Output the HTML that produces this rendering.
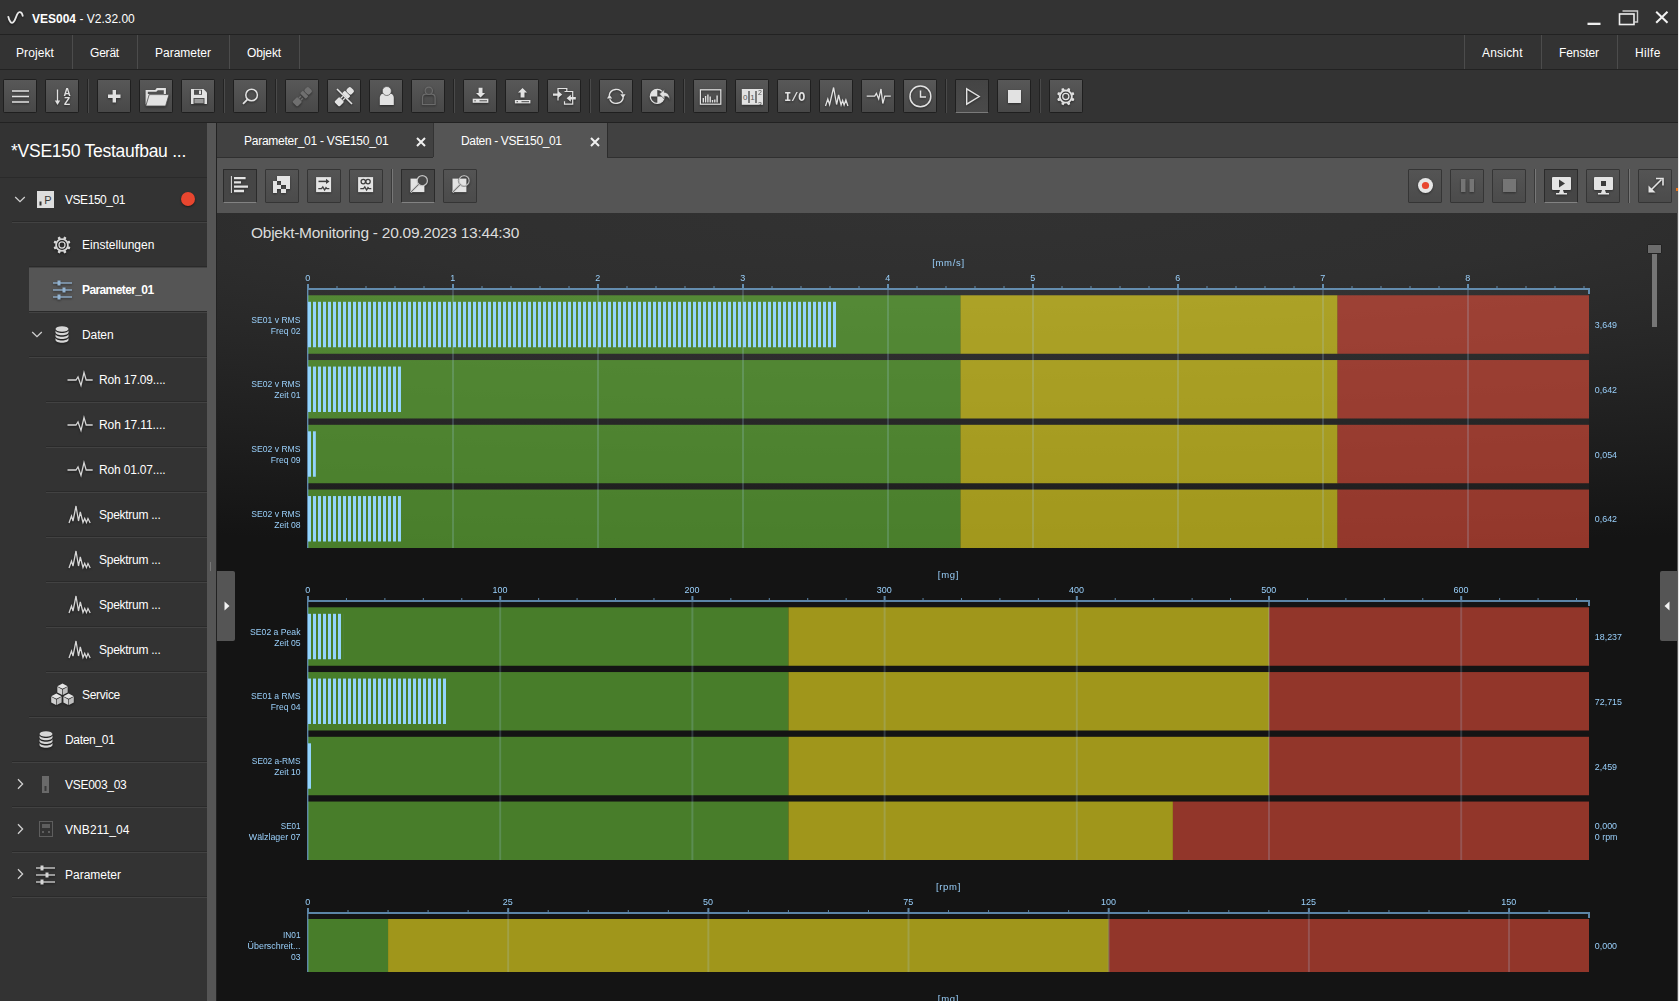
<!DOCTYPE html><html><head><meta charset="utf-8"><title>VES004</title><style>
html,body{margin:0;padding:0;background:#333;}
body{width:1679px;height:1001px;overflow:hidden;position:relative;font-family:"Liberation Sans",sans-serif;color:#fff;font-size:12px;}
.a{position:absolute;}
.t{position:absolute;white-space:nowrap;line-height:1;}
.btn{position:absolute;width:32px;height:32px;border:1px solid #1f1f1f;border-radius:1.5px;background:linear-gradient(#585858,#484848);box-sizing:content-box;}
.btn>svg{position:absolute;left:0;top:0;width:32px;height:32px;overflow:visible;}
.sep{position:absolute;width:1px;background:#232323;border-right:1px solid #4a4a4a;}
.cbtn{position:absolute;width:32px;height:32px;border:1px solid #353535;border-radius:1px;background:linear-gradient(#545454,#4b4b4b);}
.cbtn.on{background:#464646;border-color:#2b2b2b;border-bottom-color:#828282;}
.cbtn>svg{position:absolute;left:0;top:0;width:32px;height:32px;overflow:visible;}
.row{position:absolute;height:1px;background:#474747;}
</style></head><body>
<div class="a" style="left:0;top:0;width:1679px;height:34px;background:#333"></div>
<div class="a" style="left:0;top:34px;width:1679px;height:1px;background:#222"></div>
<svg class="a" style="left:0;top:0;filter:drop-shadow(0 1px 1px rgba(0,0,0,.5))" width="32" height="34" viewBox="0 0 32 34"><path d="M8.300 16.800C9.300 21.500 11.300 23.800 13.300 22.300C16 20.200 16.300 12.600 19.500 12.200C21.400 12 22.300 13.800 22.700 15.800" fill="none" stroke="#e8e8e8" stroke-width="1.800" stroke-linecap="round" stroke-linejoin="round"/></svg>
<div class="t" style="left:32px;top:13px;font-size:12px;color:#fff"><b>VES004</b> - V2.32.00</div>
<svg class="a" style="left:1580px;top:5px" width="95" height="26" viewBox="0 0 95 26"><rect x="7.500" y="17.700" width="13" height="2.300" fill="#eee"/><path d="M42.500 6 h15 v11 h-3" fill="none" stroke="#ccc" stroke-width="1.400"/><rect x="39.500" y="9" width="14.500" height="10.500" fill="#333" stroke="#eee" stroke-width="1.600"/><path d="M76.200 6.700 L87.500 17.700 M87.500 6.700 L76.200 17.700" stroke="#f2f2f2" stroke-width="2" /></svg>
<div class="a" style="left:0;top:35px;width:1679px;height:34px;background:#333"></div>
<div class="a" style="left:0;top:69px;width:1679px;height:1px;background:#222"></div>
<div class="a" style="left:72px;top:35px;width:1px;height:34px;background:#4c4c4c"></div>
<div class="a" style="left:137px;top:35px;width:1px;height:34px;background:#4c4c4c"></div>
<div class="a" style="left:229px;top:35px;width:1px;height:34px;background:#4c4c4c"></div>
<div class="a" style="left:299px;top:35px;width:1px;height:34px;background:#4c4c4c"></div>
<div class="a" style="left:1464px;top:35px;width:1px;height:34px;background:#4c4c4c"></div>
<div class="a" style="left:1541px;top:35px;width:1px;height:34px;background:#4c4c4c"></div>
<div class="a" style="left:1617px;top:35px;width:1px;height:34px;background:#4c4c4c"></div>
<div class="t" style="left:16px;top:47px;font-size:12px;color:#fff;letter-spacing:0.093px;">Projekt</div>
<div class="t" style="left:90px;top:47px;font-size:12px;color:#fff;letter-spacing:-0.202px;">Gerät</div>
<div class="t" style="left:155px;top:47px;font-size:12px;color:#fff;letter-spacing:-0.003px;">Parameter</div>
<div class="t" style="left:247px;top:47px;font-size:12px;color:#fff;letter-spacing:-0.114px;">Objekt</div>
<div class="t" style="left:1482px;top:47px;font-size:12px;color:#fff;letter-spacing:0.2px;">Ansicht</div>
<div class="t" style="left:1559px;top:47px;font-size:12px;color:#fff;letter-spacing:-0.098px;">Fenster</div>
<div class="t" style="left:1635px;top:47px;font-size:12px;color:#fff;letter-spacing:0.359px;">Hilfe</div>
<div class="a" style="left:0;top:70px;width:1679px;height:52px;background:#333"></div>
<div class="a" style="left:0;top:122px;width:1679px;height:1px;background:#222"></div>
<div class="btn" style="left:3px;top:79px;"><svg viewBox="0 0 32 32" style="filter:drop-shadow(0 1px 1px rgba(0,0,0,.45))"><path d="M8 11h17M8 16.5h17M8 22h17" stroke="#e2e2e2" stroke-width="1.6"/></svg></div>
<div class="btn" style="left:45px;top:79px;"><svg viewBox="0 0 32 32" style="filter:drop-shadow(0 1px 1px rgba(0,0,0,.45))"><path d="M11.500 9.500v13" stroke="#e2e2e2" stroke-width="1.300"/><path d="M8.800 20.500h5.400l-2.700 4.500z" fill="#e2e2e2"/><text x="21" y="15.800" font-size="10" font-weight="bold" fill="#e2e2e2" text-anchor="middle" font-family="Liberation Sans, sans-serif">A</text><text x="21" y="24.800" font-size="10" font-weight="bold" fill="#e2e2e2" text-anchor="middle" font-family="Liberation Sans, sans-serif">Z</text></svg></div>
<div class="sep" style="left:87px;top:79px;height:34px"></div>
<div class="btn" style="left:97px;top:79px;"><svg viewBox="0 0 32 32" style="filter:drop-shadow(0 1px 1px rgba(0,0,0,.45))"><path d="M16.300 10v12.500M10 16.200h12.500" stroke="#e2e2e2" stroke-width="3.400"/></svg></div>
<div class="btn" style="left:139px;top:79px;"><svg viewBox="0 0 32 32" style="filter:drop-shadow(0 1px 1px rgba(0,0,0,.45))"><path d="M6.200 24.500V10.700H15.500L17 8.700H25.300V14" fill="#e2e2e2" stroke="#e2e2e2" stroke-width="1.200"/><path d="M7.800 11.800H16.300L17.800 10.300H23.800V14H7.800z" fill="#4e4e4e"/><path d="M5.800 26L9.200 14.600H29L25.600 26z" fill="#e2e2e2" stroke="#4c4c4c" stroke-width="0.800"/></svg></div>
<div class="btn" style="left:181px;top:79px;"><svg viewBox="0 0 32 32" style="filter:drop-shadow(0 1px 1px rgba(0,0,0,.45))"><path d="M9 9h12.5l3.5 3.5V24H9z" fill="#e2e2e2"/><rect x="12" y="9.8" width="8" height="5" fill="#4e4e4e"/><rect x="17" y="10.5" width="2" height="3.5" fill="#e2e2e2"/><rect x="11.5" y="18" width="11" height="6" fill="#4e4e4e"/><path d="M12.5 20h9M12.5 22h9" stroke="#e2e2e2" stroke-width="1"/></svg></div>
<div class="sep" style="left:223px;top:79px;height:34px"></div>
<div class="btn" style="left:233px;top:79px;"><svg viewBox="0 0 32 32" style="filter:drop-shadow(0 1px 1px rgba(0,0,0,.45))"><circle cx="17.600" cy="15" r="5.800" fill="none" stroke="#e2e2e2" stroke-width="1.500"/><path d="M13.500 19.300l-4.500 4.500" stroke="#e2e2e2" stroke-width="1.800"/></svg></div>
<div class="sep" style="left:275px;top:79px;height:34px"></div>
<div class="btn" style="left:285px;top:79px;"><svg viewBox="0 0 32 32" style="filter:drop-shadow(0 1px 1px rgba(0,0,0,.45))"><g transform="rotate(-45 16.5 16.5)" fill="#6f6f6f"><rect x="5.5" y="13" width="7" height="7" rx="1.2"/><rect x="12.5" y="14.5" width="3" height="1.3"/><rect x="12.5" y="17.3" width="3" height="1.3"/><rect x="17" y="12.5" width="4" height="8" rx="1"/><rect x="21.5" y="13" width="6" height="7" rx="2"/></g></svg></div>
<div class="btn" style="left:327px;top:79px;"><svg viewBox="0 0 32 32" style="filter:drop-shadow(0 1px 1px rgba(0,0,0,.45))"><g transform="rotate(-45 16.5 16.5)" fill="#e2e2e2"><rect x="5.5" y="13" width="7" height="7" rx="1.2"/><rect x="12.5" y="14.5" width="3" height="1.3"/><rect x="12.5" y="17.3" width="3" height="1.3"/><rect x="17" y="12.5" width="4" height="8" rx="1"/><rect x="21.5" y="13" width="6" height="7" rx="2"/></g><path d="M9 9l15 15" stroke="#e2e2e2" stroke-width="1.6"/></svg></div>
<div class="btn" style="left:369px;top:79px;"><svg viewBox="0 0 32 32" style="filter:drop-shadow(0 1px 1px rgba(0,0,0,.45))"><path d="M9.800 25V18C9.800 14.800 12 13.500 14 13.500H19.600C21.600 13.500 23.800 14.800 23.800 18V25z" fill="#e2e2e2"/><circle cx="16.800" cy="11" r="4.500" fill="#e2e2e2" stroke="#505050" stroke-width="0.700"/></svg></div>
<div class="btn" style="left:411px;top:79px;"><svg viewBox="0 0 32 32" style="filter:drop-shadow(0 1px 1px rgba(0,0,0,.45))"><path d="M10.500 24.500V18C10.500 15.300 12.300 14.200 14 14.200H19.600C21.300 14.200 23.100 15.300 23.100 18V24.500z" fill="none" stroke="#6c6c6c" stroke-width="1.200"/><circle cx="16.800" cy="10.800" r="3.700" fill="#4f4f4f" stroke="#6c6c6c" stroke-width="1.200"/></svg></div>
<div class="sep" style="left:453px;top:79px;height:34px"></div>
<div class="btn" style="left:463px;top:79px;"><svg viewBox="0 0 32 32" style="filter:drop-shadow(0 1px 1px rgba(0,0,0,.45))"><path d="M14.600 7.800h3.900v5.200h2.600l-4.550 4.500l-4.550-4.500h2.600z" fill="#e2e2e2"/><rect x="8.700" y="18.700" width="15.700" height="4.100" fill="#e2e2e2"/><rect x="10.300" y="20.300" width="1.500" height="1" fill="#4a4a4a"/><rect x="15.500" y="20.300" width="7.500" height="1" fill="#4a4a4a"/></svg></div>
<div class="btn" style="left:505px;top:79px;"><svg viewBox="0 0 32 32" style="filter:drop-shadow(0 1px 1px rgba(0,0,0,.45))"><path d="M16.550 8l4.550 4.600h-2.600v4.800h-3.900v-4.800h-2.600z" fill="#e2e2e2"/><rect x="8.900" y="20" width="15.500" height="3.400" fill="#e2e2e2"/><rect x="10.500" y="21.200" width="1.500" height="1" fill="#4a4a4a"/><rect x="15.500" y="21.200" width="7.500" height="1" fill="#4a4a4a"/></svg></div>
<div class="btn" style="left:547px;top:79px;"><svg viewBox="0 0 32 32" style="filter:drop-shadow(0 1px 1px rgba(0,0,0,.45))"><path d="M10 20.500V8.500h8.800v3M16.500 11.500h8.200v12.700h-8.200v-3" fill="none" stroke="#e2e2e2" stroke-width="1.200"/><path d="M5 13.400h5v-2.300l4.200 3.500l-4.200 3.500v-2.300h-5z" fill="#e2e2e2"/><path d="M27.800 17h-5v-2.300l-4.200 3.500l4.200 3.500v-2.300h5z" fill="#e2e2e2"/></svg></div>
<div class="sep" style="left:589px;top:79px;height:34px"></div>
<div class="btn" style="left:599px;top:79px;"><svg viewBox="0 0 32 32" style="filter:drop-shadow(0 1px 1px rgba(0,0,0,.45))"><path d="M9.200 15.500a7.200 7.200 0 0 1 13.600-2" fill="none" stroke="#e2e2e2" stroke-width="1.400"/><path d="M23.300 17.300a7.200 7.200 0 0 1-13.600 2" fill="none" stroke="#e2e2e2" stroke-width="1.400"/><path d="M20.300 14.200h5.200l-2.400 4z" fill="#e2e2e2"/><path d="M12.200 18.600H7l2.400-4z" fill="#e2e2e2"/></svg></div>
<div class="btn" style="left:641px;top:79px;"><svg viewBox="0 0 32 32" style="filter:drop-shadow(0 1px 1px rgba(0,0,0,.45))"><circle cx="15.300" cy="16.400" r="7" fill="none" stroke="#e2e2e2" stroke-width="1.300"/><path d="M15.300 16.400V9.400A7 7 0 0 0 8.300 16.400z" fill="#e2e2e2"/><path d="M15.300 16.400V23.400A7 7 0 0 0 22.300 16.400z" fill="#e2e2e2"/><path d="M17.300 14l5-4.500v2.800c3.500.3 5.300 3 5.600 7.200c-1.500-2.300-3-3.200-5.600-3.300v2.800z" fill="#e2e2e2" stroke="#4e4e4e" stroke-width="0.700"/></svg></div>
<div class="sep" style="left:683px;top:79px;height:34px"></div>
<div class="btn" style="left:693px;top:79px;"><svg viewBox="0 0 32 32" style="filter:drop-shadow(0 1px 1px rgba(0,0,0,.45))"><rect x="6.400" y="9.800" width="20.400" height="14.400" fill="none" stroke="#e2e2e2" stroke-width="1.200"/><path d="M9.300 22.500v-4.500M11.600 22.500v-6.500M13.900 22.500v-8M16.200 22.500v-6M18.500 22.500v-2.500M20.800 22.500v-3M23.100 22.500v-7" stroke="#e2e2e2" stroke-width="1.400"/></svg></div>
<div class="btn" style="left:735px;top:79px;"><svg viewBox="0 0 32 32" style="filter:drop-shadow(0 1px 1px rgba(0,0,0,.45))"><rect x="5.800" y="9" width="21.200" height="15.800" fill="#e2e2e2"/><path d="M13 11v12M20 11v12" stroke="#5a5a5a" stroke-width="1.500"/><text x="9.300" y="19.800" font-size="8" fill="#555" text-anchor="middle" font-family="Liberation Sans, sans-serif">0</text><text x="16.500" y="19.800" font-size="8" fill="#555" text-anchor="middle" font-family="Liberation Sans, sans-serif">1</text><svg x="5.800" y="9" width="21.200" height="15.800" viewBox="5.800 9 21.200 15.800" overflow="hidden"><text x="24" y="14.500" font-size="7" fill="#555" text-anchor="middle" font-family="Liberation Sans, sans-serif">2</text><text x="24" y="27" font-size="7" fill="#555" text-anchor="middle" font-family="Liberation Sans, sans-serif">3</text></svg></svg></div>
<div class="btn" style="left:777px;top:79px;"><svg viewBox="0 0 32 32" style="filter:drop-shadow(0 1px 1px rgba(0,0,0,.45))"><text x="16.800" y="21.300" font-size="13" font-weight="bold" fill="#e2e2e2" text-anchor="middle" font-family="Liberation Mono, monospace" textLength="21" lengthAdjust="spacingAndGlyphs">I/O</text></svg></div>
<div class="btn" style="left:819px;top:79px;"><svg viewBox="0 0 32 32" style="filter:drop-shadow(0 1px 1px rgba(0,0,0,.45))"><path d="M5.500 26l2.300-7l1.800 5.500l4-17l3 17l2-9.500l2.500 10l1.500-4.500l1.500 4.500l1.800-5l2 6" fill="none" stroke="#e2e2e2" stroke-width="1.300" stroke-linejoin="miter"/></svg></div>
<div class="btn" style="left:861px;top:79px;"><svg viewBox="0 0 32 32" style="filter:drop-shadow(0 1px 1px rgba(0,0,0,.45))"><path d="M4.700 16.200h8l1.700-2.700l2.300 5.500l2.300-10l1.800 14.500l2-7.300h6" fill="none" stroke="#e2e2e2" stroke-width="1.300"/></svg></div>
<div class="btn" style="left:903px;top:79px;"><svg viewBox="0 0 32 32" style="filter:drop-shadow(0 1px 1px rgba(0,0,0,.45))"><circle cx="16.400" cy="16.400" r="10.400" fill="none" stroke="#e2e2e2" stroke-width="1.500"/><path d="M16.500 10.500v6.500h5.500" fill="none" stroke="#e2e2e2" stroke-width="1.500"/></svg></div>
<div class="sep" style="left:945px;top:79px;height:34px"></div>
<div class="btn" style="left:955px;top:79px;background:linear-gradient(#444,#4a4a4a);border-bottom-color:#7a7a7a;"><svg viewBox="0 0 32 32" style="filter:drop-shadow(0 1px 1px rgba(0,0,0,.45))"><path d="M10.700 8.800l12.500 7.700l-12.500 7.700z" fill="none" stroke="#e2e2e2" stroke-width="1.400"/></svg></div>
<div class="btn" style="left:997px;top:79px;"><svg viewBox="0 0 32 32" style="filter:drop-shadow(0 1px 1px rgba(0,0,0,.45))"><rect x="10" y="10" width="13" height="13" fill="#e2e2e2"/></svg></div>
<div class="sep" style="left:1039px;top:79px;height:34px"></div>
<div class="btn" style="left:1049px;top:79px;"><svg viewBox="0 0 32 32" style="filter:drop-shadow(0 1px 1px rgba(0,0,0,.45))"><circle cx="15.8" cy="16.6" r="6.05" fill="none" stroke="#e2e2e2" stroke-width="1.87"/><circle cx="15.8" cy="16.6" r="3.11" fill="none" stroke="#e2e2e2" stroke-width="1.25"/><path d="M22.50 17.56L24.37 19.00L23.56 20.97L21.21 20.65zM19.85 22.01L20.17 24.36L18.20 25.17L16.76 23.30zM14.84 23.30L13.40 25.17L11.43 24.36L11.75 22.01zM10.39 20.65L8.04 20.97L7.23 19.00L9.10 17.56zM9.10 15.64L7.23 14.20L8.04 12.23L10.39 12.55zM11.75 11.19L11.43 8.84L13.40 8.03L14.84 9.90zM16.76 9.90L18.20 8.03L20.17 8.84L19.85 11.19zM21.21 12.55L23.56 12.23L24.37 14.20L22.50 15.64z" fill="#e2e2e2"/></svg></div>
<div class="a" style="left:0;top:123px;width:207px;height:878px;background:#333"></div>
<div class="a" style="left:207px;top:123px;width:9px;height:878px;background:#555"></div>
<div class="a" style="left:216px;top:123px;width:1px;height:878px;background:#222"></div>
<div class="a" style="left:210px;top:562px;width:1px;height:9px;background:#777"></div>
<div class="t" style="left:11px;top:143px;font-size:17.5px;color:#fff;letter-spacing:-0.256px;">*VSE150 Testaufbau ...</div>
<div class="row" style="left:0;top:177px;width:207px;background:#2a2a2a"></div>
<div class="a" style="left:29px;top:267px;width:178px;height:44px;background:#555"></div>
<div class="a" style="left:12px;top:221px;width:195px;height:1px;background:#2a2a2a"></div>
<div class="a" style="left:12px;top:222px;width:195px;height:1px;background:#424242"></div>
<svg class="a" style="left:12px;top:191px" width="16" height="16" viewBox="0 0 16 16"><path d="M3.200 6l4.800 4.600l4.800-4.600" fill="none" stroke="#d0d0d0" stroke-width="1.300"/></svg>
<svg class="a" style="left:37.0px;top:191.0px;overflow:visible" width="17" height="17" viewBox="0 0 17 17"><rect x="0" y="0" width="17" height="17" fill="#dedede"/><rect x="2.500" y="10.500" width="2" height="4" fill="#333"/><text x="11" y="13" font-size="11" fill="#3a3a3a" text-anchor="middle" font-family="Liberation Sans, sans-serif">P</text></svg>
<div class="t" style="left:65px;top:194px;font-size:12px;color:#fff;letter-spacing:-0.451px;">VSE150_01</div>
<div class="a" style="left:29px;top:266px;width:178px;height:1px;background:#2a2a2a"></div>
<div class="a" style="left:29px;top:267px;width:178px;height:1px;background:#424242"></div>
<svg class="a" style="left:52.0px;top:234.5px;filter:drop-shadow(0 1px 1px rgba(0,0,0,.5));overflow:visible" width="20" height="20" viewBox="0 0 20 20"><circle cx="10" cy="10" r="5.92" fill="none" stroke="#d6d6d6" stroke-width="1.83"/><circle cx="10" cy="10" r="3.04" fill="none" stroke="#d6d6d6" stroke-width="1.22"/><path d="M16.54 10.94L18.38 12.34L17.58 14.27L15.29 13.96zM13.96 15.29L14.27 17.58L12.34 18.38L10.94 16.54zM9.06 16.54L7.66 18.38L5.73 17.58L6.04 15.29zM4.71 13.96L2.42 14.27L1.62 12.34L3.46 10.94zM3.46 9.06L1.62 7.66L2.42 5.73L4.71 6.04zM6.04 4.71L5.73 2.42L7.66 1.62L9.06 3.46zM10.94 3.46L12.34 1.62L14.27 2.42L13.96 4.71zM15.29 6.04L17.58 5.73L18.38 7.66L16.54 9.06z" fill="#d6d6d6"/></svg>
<div class="t" style="left:82px;top:239px;font-size:12px;color:#fff;letter-spacing:0.034px;">Einstellungen</div>
<div class="a" style="left:29px;top:311px;width:178px;height:1px;background:#2a2a2a"></div>
<div class="a" style="left:29px;top:312px;width:178px;height:1px;background:#424242"></div>
<svg class="a" style="left:52.5px;top:279.5px;filter:drop-shadow(0 1px 1px rgba(0,0,0,.5));overflow:visible" width="19" height="20" viewBox="0 0 19 20"><path d="M0 3h19" stroke="#93b4d2" stroke-width="1.300"/><rect x="4.5" y="0.5" width="3" height="5" fill="#93b4d2"/><rect x="7.5" y="1.5" width="2.500" height="3" fill="#333" opacity="0"/><path d="M0 10h19" stroke="#93b4d2" stroke-width="1.300"/><rect x="9.5" y="7.5" width="3" height="5" fill="#93b4d2"/><rect x="12.5" y="8.5" width="2.500" height="3" fill="#333" opacity="0"/><path d="M0 17h19" stroke="#93b4d2" stroke-width="1.300"/><rect x="4.5" y="14.5" width="3" height="5" fill="#93b4d2"/><rect x="7.5" y="15.5" width="2.500" height="3" fill="#333" opacity="0"/></svg>
<div class="t" style="left:82px;top:284px;font-size:12px;color:#fff;font-weight:bold;letter-spacing:-0.602px;">Parameter_01</div>
<div class="a" style="left:29px;top:356px;width:178px;height:1px;background:#2a2a2a"></div>
<div class="a" style="left:29px;top:357px;width:178px;height:1px;background:#424242"></div>
<svg class="a" style="left:29px;top:326px" width="16" height="16" viewBox="0 0 16 16"><path d="M3.200 6l4.800 4.600l4.800-4.600" fill="none" stroke="#d0d0d0" stroke-width="1.300"/></svg>
<svg class="a" style="left:55.0px;top:326.0px;filter:drop-shadow(0 1px 1px rgba(0,0,0,.5));overflow:visible" width="14" height="17" viewBox="0 0 14 17"><ellipse cx="7" cy="3" rx="6.500" ry="2.800" fill="#d6d6d6"/><path d="M0.500 4.3v2.200c0 1.600 2.900 2.800 6.500 2.800s6.500-1.200 6.500-2.800v-2.200c0 1.600-2.900 2.800-6.500 2.800s-6.500-1.200-6.500-2.800z" fill="#d6d6d6"/><path d="M0.500 8.0v2.200c0 1.600 2.900 2.800 6.500 2.800s6.500-1.200 6.500-2.800v-2.200c0 1.600-2.900 2.800-6.500 2.800s-6.500-1.200-6.500-2.800z" fill="#d6d6d6"/><path d="M0.500 11.7v2.200c0 1.600 2.900 2.800 6.500 2.800s6.500-1.200 6.500-2.800v-2.200c0 1.600-2.900 2.800-6.500 2.800s-6.500-1.200-6.500-2.800z" fill="#d6d6d6"/></svg>
<div class="t" style="left:82px;top:329px;font-size:12px;color:#fff;letter-spacing:-0.104px;">Daten</div>
<div class="a" style="left:46px;top:401px;width:161px;height:1px;background:#2a2a2a"></div>
<div class="a" style="left:46px;top:402px;width:161px;height:1px;background:#424242"></div>
<svg class="a" style="left:67.0px;top:371.5px;filter:drop-shadow(0 1px 1px rgba(0,0,0,.5));overflow:visible" width="26" height="16" viewBox="0 0 26 16"><path d="M0.500 8h8.500l2-3l3 8.500l3-13l2.200 7.500h6.500" fill="none" stroke="#d6d6d6" stroke-width="1.300"/></svg>
<div class="t" style="left:99px;top:374px;font-size:12px;color:#fff;letter-spacing:-0.17px;">Roh 17.09....</div>
<div class="a" style="left:46px;top:446px;width:161px;height:1px;background:#2a2a2a"></div>
<div class="a" style="left:46px;top:447px;width:161px;height:1px;background:#424242"></div>
<svg class="a" style="left:67.0px;top:416.5px;filter:drop-shadow(0 1px 1px rgba(0,0,0,.5));overflow:visible" width="26" height="16" viewBox="0 0 26 16"><path d="M0.500 8h8.500l2-3l3 8.500l3-13l2.200 7.500h6.500" fill="none" stroke="#d6d6d6" stroke-width="1.300"/></svg>
<div class="t" style="left:99px;top:419px;font-size:12px;color:#fff;letter-spacing:-0.102px;">Roh 17.11....</div>
<div class="a" style="left:46px;top:491px;width:161px;height:1px;background:#2a2a2a"></div>
<div class="a" style="left:46px;top:492px;width:161px;height:1px;background:#424242"></div>
<svg class="a" style="left:67.0px;top:461.5px;filter:drop-shadow(0 1px 1px rgba(0,0,0,.5));overflow:visible" width="26" height="16" viewBox="0 0 26 16"><path d="M0.500 8h8.500l2-3l3 8.500l3-13l2.200 7.500h6.500" fill="none" stroke="#d6d6d6" stroke-width="1.300"/></svg>
<div class="t" style="left:99px;top:464px;font-size:12px;color:#fff;letter-spacing:-0.17px;">Roh 01.07....</div>
<div class="a" style="left:46px;top:536px;width:161px;height:1px;background:#2a2a2a"></div>
<div class="a" style="left:46px;top:537px;width:161px;height:1px;background:#424242"></div>
<svg class="a" style="left:68.0px;top:504.0px;filter:drop-shadow(0 1px 1px rgba(0,0,0,.5));overflow:visible" width="24" height="20" viewBox="0 0 24 20"><path d="M1 19l2.500-7l1.500 5l3-15l2.500 15l1.800-9l2.700 10.500l1.700-4l1.700 4l1.600-4l2.200 4.500" fill="none" stroke="#d6d6d6" stroke-width="1.300"/></svg>
<div class="t" style="left:99px;top:509px;font-size:12px;color:#fff;letter-spacing:-0.266px;">Spektrum ...</div>
<div class="a" style="left:46px;top:581px;width:161px;height:1px;background:#2a2a2a"></div>
<div class="a" style="left:46px;top:582px;width:161px;height:1px;background:#424242"></div>
<svg class="a" style="left:68.0px;top:549.0px;filter:drop-shadow(0 1px 1px rgba(0,0,0,.5));overflow:visible" width="24" height="20" viewBox="0 0 24 20"><path d="M1 19l2.500-7l1.500 5l3-15l2.500 15l1.800-9l2.700 10.500l1.700-4l1.700 4l1.600-4l2.200 4.500" fill="none" stroke="#d6d6d6" stroke-width="1.300"/></svg>
<div class="t" style="left:99px;top:554px;font-size:12px;color:#fff;letter-spacing:-0.266px;">Spektrum ...</div>
<div class="a" style="left:46px;top:626px;width:161px;height:1px;background:#2a2a2a"></div>
<div class="a" style="left:46px;top:627px;width:161px;height:1px;background:#424242"></div>
<svg class="a" style="left:68.0px;top:594.0px;filter:drop-shadow(0 1px 1px rgba(0,0,0,.5));overflow:visible" width="24" height="20" viewBox="0 0 24 20"><path d="M1 19l2.500-7l1.500 5l3-15l2.500 15l1.800-9l2.700 10.500l1.700-4l1.700 4l1.600-4l2.200 4.500" fill="none" stroke="#d6d6d6" stroke-width="1.300"/></svg>
<div class="t" style="left:99px;top:599px;font-size:12px;color:#fff;letter-spacing:-0.266px;">Spektrum ...</div>
<div class="a" style="left:46px;top:671px;width:161px;height:1px;background:#2a2a2a"></div>
<div class="a" style="left:46px;top:672px;width:161px;height:1px;background:#424242"></div>
<svg class="a" style="left:68.0px;top:639.0px;filter:drop-shadow(0 1px 1px rgba(0,0,0,.5));overflow:visible" width="24" height="20" viewBox="0 0 24 20"><path d="M1 19l2.500-7l1.500 5l3-15l2.500 15l1.800-9l2.700 10.500l1.700-4l1.700 4l1.600-4l2.200 4.500" fill="none" stroke="#d6d6d6" stroke-width="1.300"/></svg>
<div class="t" style="left:99px;top:644px;font-size:12px;color:#fff;letter-spacing:-0.266px;">Spektrum ...</div>
<div class="a" style="left:29px;top:716px;width:178px;height:1px;background:#2a2a2a"></div>
<div class="a" style="left:29px;top:717px;width:178px;height:1px;background:#424242"></div>
<svg class="a" style="left:49.5px;top:682.5px;filter:drop-shadow(0 1px 1px rgba(0,0,0,.5));overflow:visible" width="25" height="23" viewBox="0 0 25 23"><path d="M12.5 0.5999999999999996l5.2 2.6l-5.2 2.6l-5.2 -2.6z" fill="#e4e4e4"/><path d="M7.3 3.8l4.9 2.6v5.7l-4.9 -2.6z" fill="#cfcfcf"/><path d="M17.7 3.8l-4.9 2.6v5.7l4.9 -2.6z" fill="#bdbdbd"/><path d="M6.4 10.600000000000001l5.2 2.6l-5.2 2.6l-5.2 -2.6z" fill="#e4e4e4"/><path d="M1.2000000000000002 13.8l4.9 2.6v5.7l-4.9 -2.6z" fill="#cfcfcf"/><path d="M11.600000000000001 13.8l-4.9 2.6v5.7l4.9 -2.6z" fill="#bdbdbd"/><path d="M18.6 10.600000000000001l5.2 2.6l-5.2 2.6l-5.2 -2.6z" fill="#e4e4e4"/><path d="M13.400000000000002 13.8l4.9 2.6v5.7l-4.9 -2.6z" fill="#cfcfcf"/><path d="M23.8 13.8l-4.9 2.6v5.7l4.9 -2.6z" fill="#bdbdbd"/></svg>
<div class="t" style="left:82px;top:689px;font-size:12px;color:#fff;letter-spacing:-0.288px;">Service</div>
<div class="a" style="left:12px;top:761px;width:195px;height:1px;background:#2a2a2a"></div>
<div class="a" style="left:12px;top:762px;width:195px;height:1px;background:#424242"></div>
<svg class="a" style="left:38.5px;top:731.0px;filter:drop-shadow(0 1px 1px rgba(0,0,0,.5));overflow:visible" width="14" height="17" viewBox="0 0 14 17"><ellipse cx="7" cy="3" rx="6.500" ry="2.800" fill="#d6d6d6"/><path d="M0.500 4.3v2.200c0 1.600 2.900 2.800 6.500 2.800s6.500-1.200 6.500-2.800v-2.200c0 1.600-2.900 2.800-6.500 2.800s-6.500-1.200-6.500-2.800z" fill="#d6d6d6"/><path d="M0.500 8.0v2.200c0 1.600 2.900 2.800 6.500 2.800s6.500-1.200 6.500-2.800v-2.200c0 1.600-2.900 2.800-6.500 2.800s-6.500-1.200-6.500-2.800z" fill="#d6d6d6"/><path d="M0.500 11.7v2.200c0 1.600 2.900 2.800 6.500 2.800s6.500-1.200 6.500-2.800v-2.200c0 1.600-2.900 2.800-6.500 2.800s-6.500-1.200-6.500-2.800z" fill="#d6d6d6"/></svg>
<div class="t" style="left:65px;top:734px;font-size:12px;color:#fff;letter-spacing:-0.318px;">Daten_01</div>
<div class="a" style="left:12px;top:806px;width:195px;height:1px;background:#2a2a2a"></div>
<div class="a" style="left:12px;top:807px;width:195px;height:1px;background:#424242"></div>
<svg class="a" style="left:12px;top:776px" width="16" height="16" viewBox="0 0 16 16"><path d="M6 3.200l4.600 4.800l-4.600 4.800" fill="none" stroke="#d0d0d0" stroke-width="1.300"/></svg>
<svg class="a" style="left:42.0px;top:776.0px;overflow:visible" width="7" height="17" viewBox="0 0 7 17"><rect x="0" y="0" width="7" height="17" fill="#6a6a6a"/><rect x="2.500" y="10" width="2" height="5" fill="#3a3a3a"/></svg>
<div class="t" style="left:65px;top:779px;font-size:12px;color:#fff;letter-spacing:-0.284px;">VSE003_03</div>
<div class="a" style="left:12px;top:851px;width:195px;height:1px;background:#2a2a2a"></div>
<div class="a" style="left:12px;top:852px;width:195px;height:1px;background:#424242"></div>
<svg class="a" style="left:12px;top:821px" width="16" height="16" viewBox="0 0 16 16"><path d="M6 3.200l4.600 4.800l-4.600 4.800" fill="none" stroke="#d0d0d0" stroke-width="1.300"/></svg>
<svg class="a" style="left:38.5px;top:821.0px;overflow:visible" width="14" height="16" viewBox="0 0 14 16"><rect x="0.500" y="0.500" width="13" height="15" fill="none" stroke="#5e5e5e" stroke-width="1"/><rect x="3" y="3" width="8" height="4" fill="#5e5e5e"/><rect x="3" y="10" width="2" height="2" fill="#5e5e5e"/><rect x="9" y="10" width="2" height="2" fill="#5e5e5e"/></svg>
<div class="t" style="left:65px;top:824px;font-size:12px;color:#fff;letter-spacing:0.075px;">VNB211_04</div>
<div class="a" style="left:12px;top:896px;width:195px;height:1px;background:#2a2a2a"></div>
<div class="a" style="left:12px;top:897px;width:195px;height:1px;background:#424242"></div>
<svg class="a" style="left:12px;top:866px" width="16" height="16" viewBox="0 0 16 16"><path d="M6 3.200l4.600 4.800l-4.600 4.800" fill="none" stroke="#d0d0d0" stroke-width="1.300"/></svg>
<svg class="a" style="left:36.0px;top:864.5px;filter:drop-shadow(0 1px 1px rgba(0,0,0,.5));overflow:visible" width="19" height="20" viewBox="0 0 19 20"><path d="M0 3h19" stroke="#d6d6d6" stroke-width="1.300"/><rect x="4.5" y="0.5" width="3" height="5" fill="#d6d6d6"/><rect x="7.5" y="1.5" width="2.500" height="3" fill="#333" opacity="0"/><path d="M0 10h19" stroke="#d6d6d6" stroke-width="1.300"/><rect x="9.5" y="7.5" width="3" height="5" fill="#d6d6d6"/><rect x="12.5" y="8.5" width="2.500" height="3" fill="#333" opacity="0"/><path d="M0 17h19" stroke="#d6d6d6" stroke-width="1.300"/><rect x="4.5" y="14.5" width="3" height="5" fill="#d6d6d6"/><rect x="7.5" y="15.5" width="2.500" height="3" fill="#333" opacity="0"/></svg>
<div class="t" style="left:65px;top:869px;font-size:12px;color:#fff;letter-spacing:-0.003px;">Parameter</div>
<div class="a" style="left:181px;top:192px;width:14px;height:14px;border-radius:7px;background:#e8462f;box-shadow:0 1px 2px rgba(0,0,0,.5)"></div>
<div class="a" style="left:217px;top:123px;width:1462px;height:34px;background:#414141"></div>
<div class="a" style="left:217px;top:157px;width:1462px;height:1px;background:#303030"></div>
<div class="a" style="left:433px;top:123px;width:174px;height:35px;background:#555"></div>
<div class="a" style="left:433px;top:123px;width:1px;height:34px;background:#333"></div>
<div class="a" style="left:607px;top:123px;width:1px;height:34px;background:#2c2c2c"></div>
<div class="t" style="left:244px;top:135px;font-size:12px;color:#fff;letter-spacing:-0.265px;">Parameter_01 - VSE150_01</div>
<div class="t" style="left:461px;top:135px;font-size:12px;color:#fff;letter-spacing:-0.356px;">Daten - VSE150_01</div>
<svg class="a" style="left:415px;top:135.5px" width="12" height="12" viewBox="0 0 12 12"><path d="M2 2l8 8M10 2l-8 8" stroke="#f0f0f0" stroke-width="2"/></svg>
<svg class="a" style="left:589px;top:135.5px" width="12" height="12" viewBox="0 0 12 12"><path d="M2 2l8 8M10 2l-8 8" stroke="#f0f0f0" stroke-width="2"/></svg>
<div class="a" style="left:217px;top:158px;width:1462px;height:55px;background:#555"></div>
<div class="cbtn on" style="left:223px;top:169px"><svg viewBox="0 0 32 32" style="top:-0.7px;filter:drop-shadow(0 1px 1px rgba(0,0,0,.4))"><path d="M7.400 7v17" stroke="#e4e4e4" stroke-width="1"/><path d="M10 9.100h11.600M10 13.400h7M10 17.700h14M10 22h10" stroke="#e4e4e4" stroke-width="2.300"/></svg></div>
<div class="cbtn" style="left:265px;top:169px"><svg viewBox="0 0 32 32" style="top:-0.7px;filter:drop-shadow(0 1px 1px rgba(0,0,0,.4))"><rect x="11.2" y="7.40" width="4.250" height="4.200" fill="#e4e4e4" shape-rendering="crispEdges"/><rect x="15.4" y="7.40" width="4.250" height="4.200" fill="#e4e4e4" shape-rendering="crispEdges"/><rect x="19.6" y="7.40" width="4.250" height="4.200" fill="#e4e4e4" shape-rendering="crispEdges"/><rect x="7.0" y="11.55" width="4.250" height="4.200" fill="#e4e4e4" shape-rendering="crispEdges"/><rect x="15.4" y="11.55" width="4.250" height="4.200" fill="#e4e4e4" shape-rendering="crispEdges"/><rect x="19.6" y="11.55" width="4.250" height="4.200" fill="#e4e4e4" shape-rendering="crispEdges"/><rect x="7.0" y="15.70" width="4.250" height="4.200" fill="#e4e4e4" shape-rendering="crispEdges"/><rect x="11.2" y="15.70" width="4.250" height="4.200" fill="#e4e4e4" shape-rendering="crispEdges"/><rect x="19.6" y="15.70" width="4.250" height="4.200" fill="#e4e4e4" shape-rendering="crispEdges"/><rect x="7.0" y="19.85" width="4.250" height="4.200" fill="#e4e4e4" shape-rendering="crispEdges"/><rect x="15.4" y="19.85" width="4.250" height="4.200" fill="#e4e4e4" shape-rendering="crispEdges"/></svg></div>
<div class="cbtn" style="left:307px;top:169px"><svg viewBox="0 0 32 32" style="top:-0.7px;filter:drop-shadow(0 1px 1px rgba(0,0,0,.4))"><rect x="8.100" y="8.100" width="15" height="15" fill="#e4e4e4"/><path d="M10.500 12.400h9" stroke="#3e3e3e" stroke-width="1.500"/><path d="M18 9.800l3.500 2.600l-3.500 2.600z" fill="#3e3e3e"/><path d="M10.300 19.600h3.200l1.300-1.600l1.800 3l1.400-2.400l1 1h2.300" fill="none" stroke="#3e3e3e" stroke-width="1.300"/></svg></div>
<div class="cbtn" style="left:349px;top:169px"><svg viewBox="0 0 32 32" style="top:-0.7px;filter:drop-shadow(0 1px 1px rgba(0,0,0,.4))"><rect x="8.100" y="8.100" width="15" height="15" fill="#e4e4e4"/><circle cx="13.300" cy="12.600" r="2.200" fill="none" stroke="#3e3e3e" stroke-width="1.300"/><circle cx="18" cy="12.600" r="2.200" fill="none" stroke="#3e3e3e" stroke-width="1.300"/><path d="M10.300 19.600h3.200l1.300-1.600l1.800 3l1.400-2.400l1 1h2.300" fill="none" stroke="#3e3e3e" stroke-width="1.300"/></svg></div>
<div class="sep" style="left:391px;top:169px;height:34px;background:#3a3a3a;border-right-color:#777"></div>
<div class="cbtn on" style="left:401px;top:169px"><svg viewBox="0 0 32 32" style="top:-0.7px;filter:drop-shadow(0 1px 1px rgba(0,0,0,.4))"><rect x="8.500" y="9.600" width="13.900" height="13.500" fill="#e4e4e4"/><circle cx="20.300" cy="11.650" r="5.100" fill="#484848" stroke="#c4c4c4" stroke-width="1.200"/><path d="M16.600 15.400l-7.900 7.900" stroke="#c4c4c4" stroke-width="2.200"/><path d="M16.600 15.400l-7.900 7.900" stroke="#4e4e4e" stroke-width="0.700"/></svg></div>
<div class="cbtn" style="left:443px;top:169px"><svg viewBox="0 0 32 32" style="top:-0.7px;filter:drop-shadow(0 1px 1px rgba(0,0,0,.4))"><rect x="8.500" y="9.600" width="13.900" height="13.500" fill="#e4e4e4"/><circle cx="20.150" cy="11.650" r="5.100" fill="none" stroke="#c4c4c4" stroke-width="1.200"/><circle cx="20.150" cy="11.650" r="5.900" fill="none" stroke="#555" stroke-width="0.500"/><path d="M16.500 15.400l-7.900 7.900" stroke="#c4c4c4" stroke-width="2.200"/><path d="M16.500 15.400l-7.900 7.900" stroke="#4e4e4e" stroke-width="0.700"/></svg></div>
<div class="cbtn" style="left:1408px;top:169px"><svg viewBox="0 0 32 32" style="top:-0.7px;filter:drop-shadow(0 1px 1px rgba(0,0,0,.4))"><circle cx="16.500" cy="16.500" r="7.500" fill="#e6e6e6"/><circle cx="16.500" cy="16.500" r="3.600" fill="#e8462f"/></svg></div>
<div class="cbtn" style="left:1450px;top:169px"><svg viewBox="0 0 32 32" style="top:-0.7px;filter:drop-shadow(0 1px 1px rgba(0,0,0,.4))"><rect x="10" y="10" width="4.500" height="13" fill="#757575"/><rect x="18.500" y="10" width="4.500" height="13" fill="#757575"/></svg></div>
<div class="cbtn" style="left:1492px;top:169px"><svg viewBox="0 0 32 32" style="top:-0.7px;filter:drop-shadow(0 1px 1px rgba(0,0,0,.4))"><rect x="10" y="10" width="13" height="13" fill="#757575"/></svg></div>
<div class="sep" style="left:1534px;top:169px;height:34px;background:#3a3a3a;border-right-color:#777"></div>
<div class="cbtn on" style="left:1544px;top:169px"><svg viewBox="0 0 32 32" style="top:-0.7px;filter:drop-shadow(0 1px 1px rgba(0,0,0,.4))"><rect x="7" y="8" width="19" height="13" rx="1" fill="#e4e4e4"/><path d="M14 10.500l6 4l-6 4z" fill="#3c3c3c"/><path d="M15 21h3l1 3h3v1.500h-11V24h3z" fill="#e4e4e4"/></svg></div>
<div class="cbtn" style="left:1586px;top:169px"><svg viewBox="0 0 32 32" style="top:-0.7px;filter:drop-shadow(0 1px 1px rgba(0,0,0,.4))"><rect x="7" y="8" width="19" height="13" rx="1" fill="#e4e4e4"/><rect x="14" y="12" width="5" height="5" fill="#3c3c3c"/><path d="M15 21h3l1 3h3v1.500h-11V24h3z" fill="#e4e4e4"/></svg></div>
<div class="sep" style="left:1628px;top:169px;height:34px;background:#3a3a3a;border-right-color:#777"></div>
<div class="cbtn" style="left:1638px;top:169px"><svg viewBox="0 0 32 32" style="top:-0.7px;filter:drop-shadow(0 1px 1px rgba(0,0,0,.4))"><path d="M10.500 22.500l12-12" stroke="#e4e4e4" stroke-width="1.600"/><path d="M17 9.500h7v7" fill="none" stroke="#e4e4e4" stroke-width="1.600"/><path d="M9.500 16.500v7h7z" fill="#e4e4e4"/></svg></div>
<div class="a" style="left:1676px;top:188px;width:3px;height:3px;background:#e8761f"></div>
<div class="a" style="left:217px;top:213px;width:1462px;height:788px;background:#141414 radial-gradient(2500px 337px at 731px 0px,#323232 0%,#2f2f2f 25%,#141414 100%) no-repeat"></div>
<div class="t" style="left:251px;top:225px;font-size:15.5px;color:#dcdcdc;letter-spacing:-0.265px;">Objekt-Monitoring - 20.09.2023 13:44:30</div>
<svg class="a" style="left:0;top:0" width="1679" height="1001" viewBox="0 0 1679 1001" font-family="Liberation Sans, sans-serif">
<rect x="308.0" y="290" width="1281.0" height="258.00" fill="#fff" opacity="0.028"/>
<rect x="308.00" y="295.30" width="652.50" height="58.45" fill="rgba(107,195,56,.6)"/>
<rect x="960.50" y="295.30" width="377.00" height="58.45" fill="rgba(253,237,32,.6)"/>
<rect x="1337.50" y="295.30" width="251.50" height="58.45" fill="rgba(230,77,57,.6)"/>
<rect x="308.00" y="360.05" width="652.50" height="58.45" fill="rgba(107,195,56,.6)"/>
<rect x="960.50" y="360.05" width="377.00" height="58.45" fill="rgba(253,237,32,.6)"/>
<rect x="1337.50" y="360.05" width="251.50" height="58.45" fill="rgba(230,77,57,.6)"/>
<rect x="308.00" y="424.80" width="652.50" height="58.45" fill="rgba(107,195,56,.6)"/>
<rect x="960.50" y="424.80" width="377.00" height="58.45" fill="rgba(253,237,32,.6)"/>
<rect x="1337.50" y="424.80" width="251.50" height="58.45" fill="rgba(230,77,57,.6)"/>
<rect x="308.00" y="489.55" width="652.50" height="58.45" fill="rgba(107,195,56,.6)"/>
<rect x="960.50" y="489.55" width="377.00" height="58.45" fill="rgba(253,237,32,.6)"/>
<rect x="1337.50" y="489.55" width="251.50" height="58.45" fill="rgba(230,77,57,.6)"/>
<rect x="307.0" y="284" width="2" height="6" fill="rgba(120,178,224,.72)"/>
<rect x="307.0" y="290" width="1" height="258.00" fill="rgba(120,178,224,.72)"/>
<rect x="308.0" y="290" width="1" height="258.00" fill="rgba(120,178,224,.72)" opacity="0.4"/>
<rect x="309.0" y="288" width="1281.0" height="2" fill="rgba(120,178,224,.72)"/>
<rect x="1588.0" y="290" width="2" height="4" fill="rgba(120,178,224,.72)"/>
<text transform="translate(307.70 281.2) scale(0.937 1)" font-size="9.600" fill="#99cffa" text-anchor="middle">0</text>
<rect x="336.50" y="286" width="1" height="2" fill="rgba(120,178,224,.72)"/>
<rect x="365.50" y="286" width="1" height="2" fill="rgba(120,178,224,.72)"/>
<rect x="394.50" y="286" width="1" height="2" fill="rgba(120,178,224,.72)"/>
<rect x="423.50" y="286" width="1" height="2" fill="rgba(120,178,224,.72)"/>
<rect x="452.00" y="284" width="2" height="4" fill="rgba(120,178,224,.72)"/>
<rect x="452.00" y="290" width="2" height="258.00" fill="#a9d4f5" opacity="0.2"/>
<text transform="translate(452.70 281.2) scale(0.937 1)" font-size="9.600" fill="#99cffa" text-anchor="middle">1</text>
<rect x="481.50" y="286" width="1" height="2" fill="rgba(120,178,224,.72)"/>
<rect x="510.50" y="286" width="1" height="2" fill="rgba(120,178,224,.72)"/>
<rect x="539.50" y="286" width="1" height="2" fill="rgba(120,178,224,.72)"/>
<rect x="568.50" y="286" width="1" height="2" fill="rgba(120,178,224,.72)"/>
<rect x="597.00" y="284" width="2" height="4" fill="rgba(120,178,224,.72)"/>
<rect x="597.00" y="290" width="2" height="258.00" fill="#a9d4f5" opacity="0.2"/>
<text transform="translate(597.70 281.2) scale(0.937 1)" font-size="9.600" fill="#99cffa" text-anchor="middle">2</text>
<rect x="626.50" y="286" width="1" height="2" fill="rgba(120,178,224,.72)"/>
<rect x="655.50" y="286" width="1" height="2" fill="rgba(120,178,224,.72)"/>
<rect x="684.50" y="286" width="1" height="2" fill="rgba(120,178,224,.72)"/>
<rect x="713.50" y="286" width="1" height="2" fill="rgba(120,178,224,.72)"/>
<rect x="742.00" y="284" width="2" height="4" fill="rgba(120,178,224,.72)"/>
<rect x="742.00" y="290" width="2" height="258.00" fill="#a9d4f5" opacity="0.2"/>
<text transform="translate(742.70 281.2) scale(0.937 1)" font-size="9.600" fill="#99cffa" text-anchor="middle">3</text>
<rect x="771.50" y="286" width="1" height="2" fill="rgba(120,178,224,.72)"/>
<rect x="800.50" y="286" width="1" height="2" fill="rgba(120,178,224,.72)"/>
<rect x="829.50" y="286" width="1" height="2" fill="rgba(120,178,224,.72)"/>
<rect x="858.50" y="286" width="1" height="2" fill="rgba(120,178,224,.72)"/>
<rect x="887.00" y="284" width="2" height="4" fill="rgba(120,178,224,.72)"/>
<rect x="887.00" y="290" width="2" height="258.00" fill="#a9d4f5" opacity="0.2"/>
<text transform="translate(887.70 281.2) scale(0.937 1)" font-size="9.600" fill="#99cffa" text-anchor="middle">4</text>
<rect x="916.50" y="286" width="1" height="2" fill="rgba(120,178,224,.72)"/>
<rect x="945.50" y="286" width="1" height="2" fill="rgba(120,178,224,.72)"/>
<rect x="974.50" y="286" width="1" height="2" fill="rgba(120,178,224,.72)"/>
<rect x="1003.50" y="286" width="1" height="2" fill="rgba(120,178,224,.72)"/>
<rect x="1032.00" y="284" width="2" height="4" fill="rgba(120,178,224,.72)"/>
<rect x="1032.00" y="290" width="2" height="258.00" fill="#a9d4f5" opacity="0.2"/>
<text transform="translate(1032.70 281.2) scale(0.937 1)" font-size="9.600" fill="#99cffa" text-anchor="middle">5</text>
<rect x="1061.50" y="286" width="1" height="2" fill="rgba(120,178,224,.72)"/>
<rect x="1090.50" y="286" width="1" height="2" fill="rgba(120,178,224,.72)"/>
<rect x="1119.50" y="286" width="1" height="2" fill="rgba(120,178,224,.72)"/>
<rect x="1148.50" y="286" width="1" height="2" fill="rgba(120,178,224,.72)"/>
<rect x="1177.00" y="284" width="2" height="4" fill="rgba(120,178,224,.72)"/>
<rect x="1177.00" y="290" width="2" height="258.00" fill="#a9d4f5" opacity="0.2"/>
<text transform="translate(1177.70 281.2) scale(0.937 1)" font-size="9.600" fill="#99cffa" text-anchor="middle">6</text>
<rect x="1206.50" y="286" width="1" height="2" fill="rgba(120,178,224,.72)"/>
<rect x="1235.50" y="286" width="1" height="2" fill="rgba(120,178,224,.72)"/>
<rect x="1264.50" y="286" width="1" height="2" fill="rgba(120,178,224,.72)"/>
<rect x="1293.50" y="286" width="1" height="2" fill="rgba(120,178,224,.72)"/>
<rect x="1322.00" y="284" width="2" height="4" fill="rgba(120,178,224,.72)"/>
<rect x="1322.00" y="290" width="2" height="258.00" fill="#a9d4f5" opacity="0.2"/>
<text transform="translate(1322.70 281.2) scale(0.937 1)" font-size="9.600" fill="#99cffa" text-anchor="middle">7</text>
<rect x="1351.50" y="286" width="1" height="2" fill="rgba(120,178,224,.72)"/>
<rect x="1380.50" y="286" width="1" height="2" fill="rgba(120,178,224,.72)"/>
<rect x="1409.50" y="286" width="1" height="2" fill="rgba(120,178,224,.72)"/>
<rect x="1438.50" y="286" width="1" height="2" fill="rgba(120,178,224,.72)"/>
<rect x="1467.00" y="284" width="2" height="4" fill="rgba(120,178,224,.72)"/>
<rect x="1467.00" y="290" width="2" height="258.00" fill="#a9d4f5" opacity="0.2"/>
<text transform="translate(1467.70 281.2) scale(0.937 1)" font-size="9.600" fill="#99cffa" text-anchor="middle">8</text>
<rect x="1496.50" y="286" width="1" height="2" fill="rgba(120,178,224,.72)"/>
<rect x="1525.50" y="286" width="1" height="2" fill="rgba(120,178,224,.72)"/>
<rect x="1554.50" y="286" width="1" height="2" fill="rgba(120,178,224,.72)"/>
<rect x="1583.50" y="286" width="1" height="2" fill="rgba(120,178,224,.72)"/>
<rect x="308.00" y="301.80" width="3.00" height="45.45" fill="#93d4fd"/>
<rect x="313.00" y="301.80" width="3.00" height="45.45" fill="#93d4fd"/>
<rect x="318.00" y="301.80" width="3.00" height="45.45" fill="#93d4fd"/>
<rect x="323.00" y="301.80" width="3.00" height="45.45" fill="#93d4fd"/>
<rect x="328.00" y="301.80" width="3.00" height="45.45" fill="#93d4fd"/>
<rect x="333.00" y="301.80" width="3.00" height="45.45" fill="#93d4fd"/>
<rect x="338.00" y="301.80" width="3.00" height="45.45" fill="#93d4fd"/>
<rect x="343.00" y="301.80" width="3.00" height="45.45" fill="#93d4fd"/>
<rect x="348.00" y="301.80" width="3.00" height="45.45" fill="#93d4fd"/>
<rect x="353.00" y="301.80" width="3.00" height="45.45" fill="#93d4fd"/>
<rect x="358.00" y="301.80" width="3.00" height="45.45" fill="#93d4fd"/>
<rect x="363.00" y="301.80" width="3.00" height="45.45" fill="#93d4fd"/>
<rect x="368.00" y="301.80" width="3.00" height="45.45" fill="#93d4fd"/>
<rect x="373.00" y="301.80" width="3.00" height="45.45" fill="#93d4fd"/>
<rect x="378.00" y="301.80" width="3.00" height="45.45" fill="#93d4fd"/>
<rect x="383.00" y="301.80" width="3.00" height="45.45" fill="#93d4fd"/>
<rect x="388.00" y="301.80" width="3.00" height="45.45" fill="#93d4fd"/>
<rect x="393.00" y="301.80" width="3.00" height="45.45" fill="#93d4fd"/>
<rect x="398.00" y="301.80" width="3.00" height="45.45" fill="#93d4fd"/>
<rect x="403.00" y="301.80" width="3.00" height="45.45" fill="#93d4fd"/>
<rect x="408.00" y="301.80" width="3.00" height="45.45" fill="#93d4fd"/>
<rect x="413.00" y="301.80" width="3.00" height="45.45" fill="#93d4fd"/>
<rect x="418.00" y="301.80" width="3.00" height="45.45" fill="#93d4fd"/>
<rect x="423.00" y="301.80" width="3.00" height="45.45" fill="#93d4fd"/>
<rect x="428.00" y="301.80" width="3.00" height="45.45" fill="#93d4fd"/>
<rect x="433.00" y="301.80" width="3.00" height="45.45" fill="#93d4fd"/>
<rect x="438.00" y="301.80" width="3.00" height="45.45" fill="#93d4fd"/>
<rect x="443.00" y="301.80" width="3.00" height="45.45" fill="#93d4fd"/>
<rect x="448.00" y="301.80" width="3.00" height="45.45" fill="#93d4fd"/>
<rect x="453.00" y="301.80" width="3.00" height="45.45" fill="#93d4fd"/>
<rect x="458.00" y="301.80" width="3.00" height="45.45" fill="#93d4fd"/>
<rect x="463.00" y="301.80" width="3.00" height="45.45" fill="#93d4fd"/>
<rect x="468.00" y="301.80" width="3.00" height="45.45" fill="#93d4fd"/>
<rect x="473.00" y="301.80" width="3.00" height="45.45" fill="#93d4fd"/>
<rect x="478.00" y="301.80" width="3.00" height="45.45" fill="#93d4fd"/>
<rect x="483.00" y="301.80" width="3.00" height="45.45" fill="#93d4fd"/>
<rect x="488.00" y="301.80" width="3.00" height="45.45" fill="#93d4fd"/>
<rect x="493.00" y="301.80" width="3.00" height="45.45" fill="#93d4fd"/>
<rect x="498.00" y="301.80" width="3.00" height="45.45" fill="#93d4fd"/>
<rect x="503.00" y="301.80" width="3.00" height="45.45" fill="#93d4fd"/>
<rect x="508.00" y="301.80" width="3.00" height="45.45" fill="#93d4fd"/>
<rect x="513.00" y="301.80" width="3.00" height="45.45" fill="#93d4fd"/>
<rect x="518.00" y="301.80" width="3.00" height="45.45" fill="#93d4fd"/>
<rect x="523.00" y="301.80" width="3.00" height="45.45" fill="#93d4fd"/>
<rect x="528.00" y="301.80" width="3.00" height="45.45" fill="#93d4fd"/>
<rect x="533.00" y="301.80" width="3.00" height="45.45" fill="#93d4fd"/>
<rect x="538.00" y="301.80" width="3.00" height="45.45" fill="#93d4fd"/>
<rect x="543.00" y="301.80" width="3.00" height="45.45" fill="#93d4fd"/>
<rect x="548.00" y="301.80" width="3.00" height="45.45" fill="#93d4fd"/>
<rect x="553.00" y="301.80" width="3.00" height="45.45" fill="#93d4fd"/>
<rect x="558.00" y="301.80" width="3.00" height="45.45" fill="#93d4fd"/>
<rect x="563.00" y="301.80" width="3.00" height="45.45" fill="#93d4fd"/>
<rect x="568.00" y="301.80" width="3.00" height="45.45" fill="#93d4fd"/>
<rect x="573.00" y="301.80" width="3.00" height="45.45" fill="#93d4fd"/>
<rect x="578.00" y="301.80" width="3.00" height="45.45" fill="#93d4fd"/>
<rect x="583.00" y="301.80" width="3.00" height="45.45" fill="#93d4fd"/>
<rect x="588.00" y="301.80" width="3.00" height="45.45" fill="#93d4fd"/>
<rect x="593.00" y="301.80" width="3.00" height="45.45" fill="#93d4fd"/>
<rect x="598.00" y="301.80" width="3.00" height="45.45" fill="#93d4fd"/>
<rect x="603.00" y="301.80" width="3.00" height="45.45" fill="#93d4fd"/>
<rect x="608.00" y="301.80" width="3.00" height="45.45" fill="#93d4fd"/>
<rect x="613.00" y="301.80" width="3.00" height="45.45" fill="#93d4fd"/>
<rect x="618.00" y="301.80" width="3.00" height="45.45" fill="#93d4fd"/>
<rect x="623.00" y="301.80" width="3.00" height="45.45" fill="#93d4fd"/>
<rect x="628.00" y="301.80" width="3.00" height="45.45" fill="#93d4fd"/>
<rect x="633.00" y="301.80" width="3.00" height="45.45" fill="#93d4fd"/>
<rect x="638.00" y="301.80" width="3.00" height="45.45" fill="#93d4fd"/>
<rect x="643.00" y="301.80" width="3.00" height="45.45" fill="#93d4fd"/>
<rect x="648.00" y="301.80" width="3.00" height="45.45" fill="#93d4fd"/>
<rect x="653.00" y="301.80" width="3.00" height="45.45" fill="#93d4fd"/>
<rect x="658.00" y="301.80" width="3.00" height="45.45" fill="#93d4fd"/>
<rect x="663.00" y="301.80" width="3.00" height="45.45" fill="#93d4fd"/>
<rect x="668.00" y="301.80" width="3.00" height="45.45" fill="#93d4fd"/>
<rect x="673.00" y="301.80" width="3.00" height="45.45" fill="#93d4fd"/>
<rect x="678.00" y="301.80" width="3.00" height="45.45" fill="#93d4fd"/>
<rect x="683.00" y="301.80" width="3.00" height="45.45" fill="#93d4fd"/>
<rect x="688.00" y="301.80" width="3.00" height="45.45" fill="#93d4fd"/>
<rect x="693.00" y="301.80" width="3.00" height="45.45" fill="#93d4fd"/>
<rect x="698.00" y="301.80" width="3.00" height="45.45" fill="#93d4fd"/>
<rect x="703.00" y="301.80" width="3.00" height="45.45" fill="#93d4fd"/>
<rect x="708.00" y="301.80" width="3.00" height="45.45" fill="#93d4fd"/>
<rect x="713.00" y="301.80" width="3.00" height="45.45" fill="#93d4fd"/>
<rect x="718.00" y="301.80" width="3.00" height="45.45" fill="#93d4fd"/>
<rect x="723.00" y="301.80" width="3.00" height="45.45" fill="#93d4fd"/>
<rect x="728.00" y="301.80" width="3.00" height="45.45" fill="#93d4fd"/>
<rect x="733.00" y="301.80" width="3.00" height="45.45" fill="#93d4fd"/>
<rect x="738.00" y="301.80" width="3.00" height="45.45" fill="#93d4fd"/>
<rect x="743.00" y="301.80" width="3.00" height="45.45" fill="#93d4fd"/>
<rect x="748.00" y="301.80" width="3.00" height="45.45" fill="#93d4fd"/>
<rect x="753.00" y="301.80" width="3.00" height="45.45" fill="#93d4fd"/>
<rect x="758.00" y="301.80" width="3.00" height="45.45" fill="#93d4fd"/>
<rect x="763.00" y="301.80" width="3.00" height="45.45" fill="#93d4fd"/>
<rect x="768.00" y="301.80" width="3.00" height="45.45" fill="#93d4fd"/>
<rect x="773.00" y="301.80" width="3.00" height="45.45" fill="#93d4fd"/>
<rect x="778.00" y="301.80" width="3.00" height="45.45" fill="#93d4fd"/>
<rect x="783.00" y="301.80" width="3.00" height="45.45" fill="#93d4fd"/>
<rect x="788.00" y="301.80" width="3.00" height="45.45" fill="#93d4fd"/>
<rect x="793.00" y="301.80" width="3.00" height="45.45" fill="#93d4fd"/>
<rect x="798.00" y="301.80" width="3.00" height="45.45" fill="#93d4fd"/>
<rect x="803.00" y="301.80" width="3.00" height="45.45" fill="#93d4fd"/>
<rect x="808.00" y="301.80" width="3.00" height="45.45" fill="#93d4fd"/>
<rect x="813.00" y="301.80" width="3.00" height="45.45" fill="#93d4fd"/>
<rect x="818.00" y="301.80" width="3.00" height="45.45" fill="#93d4fd"/>
<rect x="823.00" y="301.80" width="3.00" height="45.45" fill="#93d4fd"/>
<rect x="828.00" y="301.80" width="3.00" height="45.45" fill="#93d4fd"/>
<rect x="833.00" y="301.80" width="3.00" height="45.45" fill="#93d4fd"/>
<rect x="308.00" y="366.55" width="3.00" height="45.45" fill="#93d4fd"/>
<rect x="313.00" y="366.55" width="3.00" height="45.45" fill="#93d4fd"/>
<rect x="318.00" y="366.55" width="3.00" height="45.45" fill="#93d4fd"/>
<rect x="323.00" y="366.55" width="3.00" height="45.45" fill="#93d4fd"/>
<rect x="328.00" y="366.55" width="3.00" height="45.45" fill="#93d4fd"/>
<rect x="333.00" y="366.55" width="3.00" height="45.45" fill="#93d4fd"/>
<rect x="338.00" y="366.55" width="3.00" height="45.45" fill="#93d4fd"/>
<rect x="343.00" y="366.55" width="3.00" height="45.45" fill="#93d4fd"/>
<rect x="348.00" y="366.55" width="3.00" height="45.45" fill="#93d4fd"/>
<rect x="353.00" y="366.55" width="3.00" height="45.45" fill="#93d4fd"/>
<rect x="358.00" y="366.55" width="3.00" height="45.45" fill="#93d4fd"/>
<rect x="363.00" y="366.55" width="3.00" height="45.45" fill="#93d4fd"/>
<rect x="368.00" y="366.55" width="3.00" height="45.45" fill="#93d4fd"/>
<rect x="373.00" y="366.55" width="3.00" height="45.45" fill="#93d4fd"/>
<rect x="378.00" y="366.55" width="3.00" height="45.45" fill="#93d4fd"/>
<rect x="383.00" y="366.55" width="3.00" height="45.45" fill="#93d4fd"/>
<rect x="388.00" y="366.55" width="3.00" height="45.45" fill="#93d4fd"/>
<rect x="393.00" y="366.55" width="3.00" height="45.45" fill="#93d4fd"/>
<rect x="398.00" y="366.55" width="3.00" height="45.45" fill="#93d4fd"/>
<rect x="308.00" y="431.30" width="3.00" height="45.45" fill="#93d4fd"/>
<rect x="313.00" y="431.30" width="2.83" height="45.45" fill="#93d4fd"/>
<rect x="308.00" y="496.05" width="3.00" height="45.45" fill="#93d4fd"/>
<rect x="313.00" y="496.05" width="3.00" height="45.45" fill="#93d4fd"/>
<rect x="318.00" y="496.05" width="3.00" height="45.45" fill="#93d4fd"/>
<rect x="323.00" y="496.05" width="3.00" height="45.45" fill="#93d4fd"/>
<rect x="328.00" y="496.05" width="3.00" height="45.45" fill="#93d4fd"/>
<rect x="333.00" y="496.05" width="3.00" height="45.45" fill="#93d4fd"/>
<rect x="338.00" y="496.05" width="3.00" height="45.45" fill="#93d4fd"/>
<rect x="343.00" y="496.05" width="3.00" height="45.45" fill="#93d4fd"/>
<rect x="348.00" y="496.05" width="3.00" height="45.45" fill="#93d4fd"/>
<rect x="353.00" y="496.05" width="3.00" height="45.45" fill="#93d4fd"/>
<rect x="358.00" y="496.05" width="3.00" height="45.45" fill="#93d4fd"/>
<rect x="363.00" y="496.05" width="3.00" height="45.45" fill="#93d4fd"/>
<rect x="368.00" y="496.05" width="3.00" height="45.45" fill="#93d4fd"/>
<rect x="373.00" y="496.05" width="3.00" height="45.45" fill="#93d4fd"/>
<rect x="378.00" y="496.05" width="3.00" height="45.45" fill="#93d4fd"/>
<rect x="383.00" y="496.05" width="3.00" height="45.45" fill="#93d4fd"/>
<rect x="388.00" y="496.05" width="3.00" height="45.45" fill="#93d4fd"/>
<rect x="393.00" y="496.05" width="3.00" height="45.45" fill="#93d4fd"/>
<rect x="398.00" y="496.05" width="3.00" height="45.45" fill="#93d4fd"/>
<text x="948.5" y="266" font-size="9.500" fill="#99cffa" text-anchor="middle" letter-spacing="0.7">[mm/s]</text>
<text transform="translate(300.5 322.53) scale(0.896 1)" font-size="9.600" fill="#99cffa" text-anchor="end">SE01 v RMS</text>
<text transform="translate(300.5 333.53) scale(0.896 1)" font-size="9.600" fill="#99cffa" text-anchor="end">Freq 02</text>
<text transform="translate(1594.8 328.23) scale(0.927 1)" font-size="9.600" fill="#99cffa">3,649</text>
<text transform="translate(300.5 387.28) scale(0.896 1)" font-size="9.600" fill="#99cffa" text-anchor="end">SE02 v RMS</text>
<text transform="translate(300.5 398.28) scale(0.896 1)" font-size="9.600" fill="#99cffa" text-anchor="end">Zeit 01</text>
<text transform="translate(1594.8 392.98) scale(0.927 1)" font-size="9.600" fill="#99cffa">0,642</text>
<text transform="translate(300.5 452.03) scale(0.896 1)" font-size="9.600" fill="#99cffa" text-anchor="end">SE02 v RMS</text>
<text transform="translate(300.5 463.03) scale(0.896 1)" font-size="9.600" fill="#99cffa" text-anchor="end">Freq 09</text>
<text transform="translate(1594.8 457.73) scale(0.927 1)" font-size="9.600" fill="#99cffa">0,054</text>
<text transform="translate(300.5 516.77) scale(0.896 1)" font-size="9.600" fill="#99cffa" text-anchor="end">SE02 v RMS</text>
<text transform="translate(300.5 527.77) scale(0.896 1)" font-size="9.600" fill="#99cffa" text-anchor="end">Zeit 08</text>
<text transform="translate(1594.8 522.47) scale(0.927 1)" font-size="9.600" fill="#99cffa">0,642</text>
<rect x="308.00" y="607.30" width="480.50" height="58.45" fill="rgba(107,195,56,.6)"/>
<rect x="788.50" y="607.30" width="480.50" height="58.45" fill="rgba(253,237,32,.6)"/>
<rect x="1269.00" y="607.30" width="320.00" height="58.45" fill="rgba(230,77,57,.6)"/>
<rect x="308.00" y="672.05" width="480.50" height="58.45" fill="rgba(107,195,56,.6)"/>
<rect x="788.50" y="672.05" width="480.50" height="58.45" fill="rgba(253,237,32,.6)"/>
<rect x="1269.00" y="672.05" width="320.00" height="58.45" fill="rgba(230,77,57,.6)"/>
<rect x="308.00" y="736.80" width="480.50" height="58.45" fill="rgba(107,195,56,.6)"/>
<rect x="788.50" y="736.80" width="480.50" height="58.45" fill="rgba(253,237,32,.6)"/>
<rect x="1269.00" y="736.80" width="320.00" height="58.45" fill="rgba(230,77,57,.6)"/>
<rect x="308.00" y="801.55" width="480.50" height="58.45" fill="rgba(107,195,56,.6)"/>
<rect x="788.50" y="801.55" width="384.40" height="58.45" fill="rgba(253,237,32,.6)"/>
<rect x="1172.90" y="801.55" width="416.10" height="58.45" fill="rgba(230,77,57,.6)"/>
<rect x="307.0" y="596" width="2" height="6" fill="rgba(120,178,224,.72)"/>
<rect x="307.0" y="602" width="1" height="258.00" fill="rgba(120,178,224,.72)"/>
<rect x="308.0" y="602" width="1" height="258.00" fill="rgba(120,178,224,.72)" opacity="0.4"/>
<rect x="309.0" y="600" width="1281.0" height="2" fill="rgba(120,178,224,.72)"/>
<rect x="1588.0" y="602" width="2" height="4" fill="rgba(120,178,224,.72)"/>
<text transform="translate(307.70 593.2) scale(0.937 1)" font-size="9.600" fill="#99cffa" text-anchor="middle">0</text>
<rect x="345.94" y="598" width="1" height="2" fill="rgba(120,178,224,.72)"/>
<rect x="384.38" y="598" width="1" height="2" fill="rgba(120,178,224,.72)"/>
<rect x="422.82" y="598" width="1" height="2" fill="rgba(120,178,224,.72)"/>
<rect x="461.26" y="598" width="1" height="2" fill="rgba(120,178,224,.72)"/>
<rect x="499.20" y="596" width="2" height="4" fill="rgba(120,178,224,.72)"/>
<rect x="499.20" y="602" width="2" height="258.00" fill="#a9d4f5" opacity="0.2"/>
<text transform="translate(499.90 593.2) scale(0.937 1)" font-size="9.600" fill="#99cffa" text-anchor="middle">100</text>
<rect x="538.14" y="598" width="1" height="2" fill="rgba(120,178,224,.72)"/>
<rect x="576.58" y="598" width="1" height="2" fill="rgba(120,178,224,.72)"/>
<rect x="615.02" y="598" width="1" height="2" fill="rgba(120,178,224,.72)"/>
<rect x="653.46" y="598" width="1" height="2" fill="rgba(120,178,224,.72)"/>
<rect x="691.40" y="596" width="2" height="4" fill="rgba(120,178,224,.72)"/>
<rect x="691.40" y="602" width="2" height="258.00" fill="#a9d4f5" opacity="0.2"/>
<text transform="translate(692.10 593.2) scale(0.937 1)" font-size="9.600" fill="#99cffa" text-anchor="middle">200</text>
<rect x="730.34" y="598" width="1" height="2" fill="rgba(120,178,224,.72)"/>
<rect x="768.78" y="598" width="1" height="2" fill="rgba(120,178,224,.72)"/>
<rect x="807.22" y="598" width="1" height="2" fill="rgba(120,178,224,.72)"/>
<rect x="845.66" y="598" width="1" height="2" fill="rgba(120,178,224,.72)"/>
<rect x="883.60" y="596" width="2" height="4" fill="rgba(120,178,224,.72)"/>
<rect x="883.60" y="602" width="2" height="258.00" fill="#a9d4f5" opacity="0.2"/>
<text transform="translate(884.30 593.2) scale(0.937 1)" font-size="9.600" fill="#99cffa" text-anchor="middle">300</text>
<rect x="922.54" y="598" width="1" height="2" fill="rgba(120,178,224,.72)"/>
<rect x="960.98" y="598" width="1" height="2" fill="rgba(120,178,224,.72)"/>
<rect x="999.42" y="598" width="1" height="2" fill="rgba(120,178,224,.72)"/>
<rect x="1037.86" y="598" width="1" height="2" fill="rgba(120,178,224,.72)"/>
<rect x="1075.80" y="596" width="2" height="4" fill="rgba(120,178,224,.72)"/>
<rect x="1075.80" y="602" width="2" height="258.00" fill="#a9d4f5" opacity="0.2"/>
<text transform="translate(1076.50 593.2) scale(0.937 1)" font-size="9.600" fill="#99cffa" text-anchor="middle">400</text>
<rect x="1114.74" y="598" width="1" height="2" fill="rgba(120,178,224,.72)"/>
<rect x="1153.18" y="598" width="1" height="2" fill="rgba(120,178,224,.72)"/>
<rect x="1191.62" y="598" width="1" height="2" fill="rgba(120,178,224,.72)"/>
<rect x="1230.06" y="598" width="1" height="2" fill="rgba(120,178,224,.72)"/>
<rect x="1268.00" y="596" width="2" height="4" fill="rgba(120,178,224,.72)"/>
<rect x="1268.00" y="602" width="2" height="258.00" fill="#a9d4f5" opacity="0.2"/>
<text transform="translate(1268.70 593.2) scale(0.937 1)" font-size="9.600" fill="#99cffa" text-anchor="middle">500</text>
<rect x="1306.94" y="598" width="1" height="2" fill="rgba(120,178,224,.72)"/>
<rect x="1345.38" y="598" width="1" height="2" fill="rgba(120,178,224,.72)"/>
<rect x="1383.82" y="598" width="1" height="2" fill="rgba(120,178,224,.72)"/>
<rect x="1422.26" y="598" width="1" height="2" fill="rgba(120,178,224,.72)"/>
<rect x="1460.20" y="596" width="2" height="4" fill="rgba(120,178,224,.72)"/>
<rect x="1460.20" y="602" width="2" height="258.00" fill="#a9d4f5" opacity="0.2"/>
<text transform="translate(1460.90 593.2) scale(0.937 1)" font-size="9.600" fill="#99cffa" text-anchor="middle">600</text>
<rect x="1499.14" y="598" width="1" height="2" fill="rgba(120,178,224,.72)"/>
<rect x="1537.58" y="598" width="1" height="2" fill="rgba(120,178,224,.72)"/>
<rect x="1576.02" y="598" width="1" height="2" fill="rgba(120,178,224,.72)"/>
<rect x="308.00" y="613.80" width="3.00" height="45.45" fill="#93d4fd"/>
<rect x="313.00" y="613.80" width="3.00" height="45.45" fill="#93d4fd"/>
<rect x="318.00" y="613.80" width="3.00" height="45.45" fill="#93d4fd"/>
<rect x="323.00" y="613.80" width="3.00" height="45.45" fill="#93d4fd"/>
<rect x="328.00" y="613.80" width="3.00" height="45.45" fill="#93d4fd"/>
<rect x="333.00" y="613.80" width="3.00" height="45.45" fill="#93d4fd"/>
<rect x="338.00" y="613.80" width="3.00" height="45.45" fill="#93d4fd"/>
<rect x="343.00" y="613.80" width="0.05" height="45.45" fill="#93d4fd"/>
<rect x="308.00" y="678.55" width="3.00" height="45.45" fill="#93d4fd"/>
<rect x="313.00" y="678.55" width="3.00" height="45.45" fill="#93d4fd"/>
<rect x="318.00" y="678.55" width="3.00" height="45.45" fill="#93d4fd"/>
<rect x="323.00" y="678.55" width="3.00" height="45.45" fill="#93d4fd"/>
<rect x="328.00" y="678.55" width="3.00" height="45.45" fill="#93d4fd"/>
<rect x="333.00" y="678.55" width="3.00" height="45.45" fill="#93d4fd"/>
<rect x="338.00" y="678.55" width="3.00" height="45.45" fill="#93d4fd"/>
<rect x="343.00" y="678.55" width="3.00" height="45.45" fill="#93d4fd"/>
<rect x="348.00" y="678.55" width="3.00" height="45.45" fill="#93d4fd"/>
<rect x="353.00" y="678.55" width="3.00" height="45.45" fill="#93d4fd"/>
<rect x="358.00" y="678.55" width="3.00" height="45.45" fill="#93d4fd"/>
<rect x="363.00" y="678.55" width="3.00" height="45.45" fill="#93d4fd"/>
<rect x="368.00" y="678.55" width="3.00" height="45.45" fill="#93d4fd"/>
<rect x="373.00" y="678.55" width="3.00" height="45.45" fill="#93d4fd"/>
<rect x="378.00" y="678.55" width="3.00" height="45.45" fill="#93d4fd"/>
<rect x="383.00" y="678.55" width="3.00" height="45.45" fill="#93d4fd"/>
<rect x="388.00" y="678.55" width="3.00" height="45.45" fill="#93d4fd"/>
<rect x="393.00" y="678.55" width="3.00" height="45.45" fill="#93d4fd"/>
<rect x="398.00" y="678.55" width="3.00" height="45.45" fill="#93d4fd"/>
<rect x="403.00" y="678.55" width="3.00" height="45.45" fill="#93d4fd"/>
<rect x="408.00" y="678.55" width="3.00" height="45.45" fill="#93d4fd"/>
<rect x="413.00" y="678.55" width="3.00" height="45.45" fill="#93d4fd"/>
<rect x="418.00" y="678.55" width="3.00" height="45.45" fill="#93d4fd"/>
<rect x="423.00" y="678.55" width="3.00" height="45.45" fill="#93d4fd"/>
<rect x="428.00" y="678.55" width="3.00" height="45.45" fill="#93d4fd"/>
<rect x="433.00" y="678.55" width="3.00" height="45.45" fill="#93d4fd"/>
<rect x="438.00" y="678.55" width="3.00" height="45.45" fill="#93d4fd"/>
<rect x="443.00" y="678.55" width="3.00" height="45.45" fill="#93d4fd"/>
<rect x="308.00" y="743.30" width="3.00" height="45.45" fill="#93d4fd"/>
<text x="948.5" y="578" font-size="9.500" fill="#99cffa" text-anchor="middle" letter-spacing="0.7">[mg]</text>
<text transform="translate(300.5 634.52) scale(0.901 1)" font-size="9.600" fill="#99cffa" text-anchor="end">SE02 a Peak</text>
<text transform="translate(300.5 645.52) scale(0.896 1)" font-size="9.600" fill="#99cffa" text-anchor="end">Zeit 05</text>
<text transform="translate(1594.8 640.22) scale(0.927 1)" font-size="9.600" fill="#99cffa">18,237</text>
<text transform="translate(300.5 699.27) scale(0.892 1)" font-size="9.600" fill="#99cffa" text-anchor="end">SE01 a RMS</text>
<text transform="translate(300.5 710.27) scale(0.896 1)" font-size="9.600" fill="#99cffa" text-anchor="end">Freq 04</text>
<text transform="translate(1594.8 704.97) scale(0.927 1)" font-size="9.600" fill="#99cffa">72,715</text>
<text transform="translate(300.5 764.02) scale(0.870 1)" font-size="9.600" fill="#99cffa" text-anchor="end">SE02 a-RMS</text>
<text transform="translate(300.5 775.02) scale(0.896 1)" font-size="9.600" fill="#99cffa" text-anchor="end">Zeit 10</text>
<text transform="translate(1594.8 769.72) scale(0.927 1)" font-size="9.600" fill="#99cffa">2,459</text>
<text transform="translate(300.5 828.77) scale(0.841 1)" font-size="9.600" fill="#99cffa" text-anchor="end">SE01</text>
<text transform="translate(300.5 839.77) scale(0.924 1)" font-size="9.600" fill="#99cffa" text-anchor="end">Wälzlager 07</text>
<text transform="translate(1594.8 828.97) scale(0.927 1)" font-size="9.600" fill="#99cffa">0,000</text>
<text transform="translate(1594.8 839.97) scale(0.927 1)" font-size="9.600" fill="#99cffa">0 rpm</text>
<rect x="308.00" y="919.00" width="80.07" height="53" fill="rgba(107,195,56,.6)"/>
<rect x="388.07" y="919.00" width="720.63" height="53" fill="rgba(253,237,32,.6)"/>
<rect x="1108.70" y="919.00" width="480.30" height="53" fill="rgba(230,77,57,.6)"/>
<rect x="307.0" y="908" width="2" height="6" fill="rgba(120,178,224,.72)"/>
<rect x="307.0" y="914" width="1" height="58.00" fill="rgba(120,178,224,.72)"/>
<rect x="308.0" y="914" width="1" height="58.00" fill="rgba(120,178,224,.72)" opacity="0.4"/>
<rect x="309.0" y="912" width="1281.0" height="2" fill="rgba(120,178,224,.72)"/>
<rect x="1588.0" y="914" width="2" height="4" fill="rgba(120,178,224,.72)"/>
<text transform="translate(307.70 905.2) scale(0.937 1)" font-size="9.600" fill="#99cffa" text-anchor="middle">0</text>
<rect x="347.53" y="910" width="1" height="2" fill="rgba(120,178,224,.72)"/>
<rect x="387.57" y="910" width="1" height="2" fill="rgba(120,178,224,.72)"/>
<rect x="427.61" y="910" width="1" height="2" fill="rgba(120,178,224,.72)"/>
<rect x="467.64" y="910" width="1" height="2" fill="rgba(120,178,224,.72)"/>
<rect x="507.17" y="908" width="2" height="4" fill="rgba(120,178,224,.72)"/>
<rect x="507.17" y="914" width="2" height="58.00" fill="#a9d4f5" opacity="0.2"/>
<text transform="translate(507.87 905.2) scale(0.937 1)" font-size="9.600" fill="#99cffa" text-anchor="middle">25</text>
<rect x="547.71" y="910" width="1" height="2" fill="rgba(120,178,224,.72)"/>
<rect x="587.75" y="910" width="1" height="2" fill="rgba(120,178,224,.72)"/>
<rect x="627.78" y="910" width="1" height="2" fill="rgba(120,178,224,.72)"/>
<rect x="667.82" y="910" width="1" height="2" fill="rgba(120,178,224,.72)"/>
<rect x="707.35" y="908" width="2" height="4" fill="rgba(120,178,224,.72)"/>
<rect x="707.35" y="914" width="2" height="58.00" fill="#a9d4f5" opacity="0.2"/>
<text transform="translate(708.05 905.2) scale(0.937 1)" font-size="9.600" fill="#99cffa" text-anchor="middle">50</text>
<rect x="747.88" y="910" width="1" height="2" fill="rgba(120,178,224,.72)"/>
<rect x="787.92" y="910" width="1" height="2" fill="rgba(120,178,224,.72)"/>
<rect x="827.95" y="910" width="1" height="2" fill="rgba(120,178,224,.72)"/>
<rect x="867.99" y="910" width="1" height="2" fill="rgba(120,178,224,.72)"/>
<rect x="907.52" y="908" width="2" height="4" fill="rgba(120,178,224,.72)"/>
<rect x="907.52" y="914" width="2" height="58.00" fill="#a9d4f5" opacity="0.2"/>
<text transform="translate(908.23 905.2) scale(0.937 1)" font-size="9.600" fill="#99cffa" text-anchor="middle">75</text>
<rect x="948.06" y="910" width="1" height="2" fill="rgba(120,178,224,.72)"/>
<rect x="988.10" y="910" width="1" height="2" fill="rgba(120,178,224,.72)"/>
<rect x="1028.13" y="910" width="1" height="2" fill="rgba(120,178,224,.72)"/>
<rect x="1068.16" y="910" width="1" height="2" fill="rgba(120,178,224,.72)"/>
<rect x="1107.70" y="908" width="2" height="4" fill="rgba(120,178,224,.72)"/>
<rect x="1107.70" y="914" width="2" height="58.00" fill="#a9d4f5" opacity="0.2"/>
<text transform="translate(1108.40 905.2) scale(0.937 1)" font-size="9.600" fill="#99cffa" text-anchor="middle">100</text>
<rect x="1148.24" y="910" width="1" height="2" fill="rgba(120,178,224,.72)"/>
<rect x="1188.27" y="910" width="1" height="2" fill="rgba(120,178,224,.72)"/>
<rect x="1228.30" y="910" width="1" height="2" fill="rgba(120,178,224,.72)"/>
<rect x="1268.34" y="910" width="1" height="2" fill="rgba(120,178,224,.72)"/>
<rect x="1307.88" y="908" width="2" height="4" fill="rgba(120,178,224,.72)"/>
<rect x="1307.88" y="914" width="2" height="58.00" fill="#a9d4f5" opacity="0.2"/>
<text transform="translate(1308.58 905.2) scale(0.937 1)" font-size="9.600" fill="#99cffa" text-anchor="middle">125</text>
<rect x="1348.41" y="910" width="1" height="2" fill="rgba(120,178,224,.72)"/>
<rect x="1388.44" y="910" width="1" height="2" fill="rgba(120,178,224,.72)"/>
<rect x="1428.48" y="910" width="1" height="2" fill="rgba(120,178,224,.72)"/>
<rect x="1468.51" y="910" width="1" height="2" fill="rgba(120,178,224,.72)"/>
<rect x="1508.05" y="908" width="2" height="4" fill="rgba(120,178,224,.72)"/>
<rect x="1508.05" y="914" width="2" height="58.00" fill="#a9d4f5" opacity="0.2"/>
<text transform="translate(1508.75 905.2) scale(0.937 1)" font-size="9.600" fill="#99cffa" text-anchor="middle">150</text>
<rect x="1548.59" y="910" width="1" height="2" fill="rgba(120,178,224,.72)"/>
<text x="948.5" y="890" font-size="9.500" fill="#99cffa" text-anchor="middle" letter-spacing="0.7">[rpm]</text>
<text transform="translate(300.5 938.00) scale(0.863 1)" font-size="9.600" fill="#99cffa" text-anchor="end">IN01</text>
<text transform="translate(300.5 949.00) scale(0.928 1)" font-size="9.600" fill="#99cffa" text-anchor="end">Überschreit...</text>
<text transform="translate(300.5 960.00) scale(0.896 1)" font-size="9.600" fill="#99cffa" text-anchor="end">03</text>
<text transform="translate(1594.8 949.20) scale(0.927 1)" font-size="9.600" fill="#99cffa">0,000</text>
<text x="948.5" y="1002" font-size="9.500" fill="#99cffa" text-anchor="middle" letter-spacing="0.7">[mg]</text>
</svg>
<div class="a" style="left:217px;top:571px;width:18px;height:70px;background:#555;border-radius:0 2px 2px 0"></div>
<svg class="a" style="left:222px;top:600px" width="10" height="12" viewBox="0 0 10 12"><path d="M2.500 1.500l5 4.500l-5 4.500z" fill="#f2f2f2"/></svg>
<div class="a" style="left:1660px;top:571px;width:17px;height:70px;background:#555;border-radius:2px 0 0 2px"></div>
<svg class="a" style="left:1662px;top:600px" width="10" height="12" viewBox="0 0 10 12"><path d="M7.500 1.500l-5 4.500l5 4.500z" fill="#f2f2f2"/></svg>
<div class="a" style="left:1652px;top:252px;width:5px;height:75px;background:#767676"></div>
<div class="a" style="left:1647px;top:244px;width:13px;height:8px;background:#6c6c6c;border:1px solid #222;border-radius:1px"></div>
<div class="a" style="left:1677px;top:213px;width:1px;height:788px;background:#5a5a5a"></div>
<div class="a" style="left:1678px;top:0;width:1px;height:1001px;background:#e6e6e6"></div>
</body></html>
